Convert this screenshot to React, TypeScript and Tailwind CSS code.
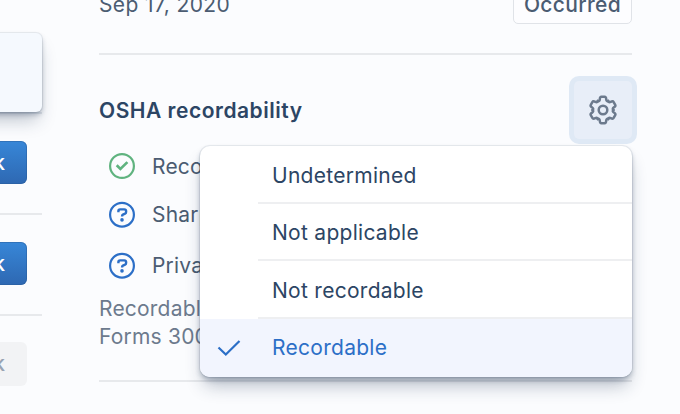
import React from "react";

function ClippedButton({ disabled = false }: { disabled?: boolean }) {
  const look = disabled
    ? "h-[44px] bg-[#f2f3f5] text-[#98a3b3]"
    : "h-[43px] bg-linear-to-b from-[#3787d8] to-[#2e68b2] text-white inset-shadow-[0_0_0_1px_rgba(40,90,150,0.45)]";
  return (
    <div className={`-ml-[20px] flex w-[47px] items-center justify-end rounded-[6px] pr-[22px] text-[21px] font-medium ${look}`}>
      <span>k</span>
    </div>
  );
}

function CheckCircle() {
  return (
    <svg width="28" height="28" viewBox="0 0 28 28" fill="none" stroke="#5fb37f">
      <circle cx="14" cy="14" r="11.9" strokeWidth="2.2" />
      <path d="M8.700 13.300l3.700 3.600 7-6.800" strokeWidth="2.700" />
    </svg>
  );
}

function QuestionCircle() {
  return (
    <svg width="28" height="28" viewBox="0 0 28 28" fill="none" stroke="#2c6fc7">
      <circle cx="14" cy="13.700" r="11.9" strokeWidth="2.2" />
      <path d="M10.400 11.200V9.900q0-1.500 1.700-1.500h4.200q1.800 0 1.800 1.700v.900q0 1.200-1 1.600l-2.200 1q-.8.400-.8 1.300v.700" strokeWidth="2.400" />
      <circle cx="14" cy="18.900" r="1.800" fill="#2c6fc7" stroke="none" />
    </svg>
  );
}

const toothAngles = [0, 60, 120, 180, 240, 300];

function Gear() {
  return (
    <svg width="30" height="30" viewBox="-15 -15 30 30" fill="none" stroke="#6c7a8d" strokeWidth="2.500" strokeLinecap="round" strokeLinejoin="round">
      {toothAngles.map((angle) => (
        <path
          key={angle}
          transform={`rotate(${angle})`}
          d="M-5.250-9.100C-4-8.400-3.300-9.300-3.200-10.700C-3.100-12.600-2.600-13.200-1.600-13.200H1.600C2.600-13.200 3.100-12.600 3.200-10.700C3.300-9.300 4-8.400 5.250-9.100"
        />
      ))}
      <circle r="4.300" />
    </svg>
  );
}

const statuses = [
  { label: "Recordable", done: true, height: "h-[48px]" },
  { label: "Sharps injury", done: false, height: "h-[50px]" },
  { label: "Privacy case", done: false, height: "h-[51px]" },
];

const options = [
  { label: "Undetermined", height: "h-[58px]" },
  { label: "Not applicable", height: "h-[57px]" },
  { label: "Not recordable", height: "h-[58px]" },
  { label: "Recordable", height: "h-[58px]" },
];

function Menu() {
  return (
    <div className="absolute top-[146px] left-[200px] z-10 w-[432px] overflow-hidden rounded-[10px] bg-white text-[21px] tracking-[0.28px] text-[#2c4564] shadow-[0_0_0_1px_rgba(20,40,70,0.07),0_3px_5px_rgba(30,50,80,0.28),0_12px_18px_-4px_rgba(30,50,80,0.32)]">
      {options.map(({ label, height }) => {
        const selected = label === "Recordable";
        return (
          <div key={label} className={`flex ${height} ${selected ? "bg-[#f2f5fe] text-[#2c6fc7]" : ""}`}>
            <div className="flex w-[58px] items-center justify-center">
              {selected && (
                <svg width="24" height="18" viewBox="0 0 24 18" fill="none" stroke="#2c6fc7" strokeWidth="2.2">
                  <path d="M1.500 8.500l7.300 7L22.500 2" />
                </svg>
              )}
            </div>
            <div className={`flex flex-1 items-center pl-[14px] ${selected ? "" : "border-b-2 border-[#eeeff1] pt-[3px]"}`}>{label}</div>
          </div>
        );
      })}
    </div>
  );
}

export default function App() {
  return (
    <div className="relative flex h-[414px] w-[680px] overflow-hidden bg-[#fbfcfe] font-[Inter,sans-serif] whitespace-nowrap text-[#4b5c72]">
      <aside className="flex w-[42px] shrink-0 flex-col pt-[33px]">
        <div className="-ml-[30px] h-[79px] rounded-[6px] bg-[#f5f9fe] shadow-[0_0_0_1px_rgba(20,40,70,0.07),0_3px_5px_rgba(30,50,80,0.26),0_12px_18px_-4px_rgba(30,50,80,0.28)]" />
        <div className="mb-[27px] h-[2px] bg-[#3c506e]/12" />
        <ClippedButton />
        <div className="mt-[29px] mb-[27px] h-[2px] bg-[#e7e9ec]" />
        <ClippedButton />
        <div className="mt-[29px] mb-[26px] h-[2px] bg-[#e7e9ec]" />
        <ClippedButton disabled />
      </aside>
      <main className="ml-[57px] w-[533px] text-[21px] tracking-[0.2px]">
        <div className="flex h-[53px] items-start justify-between">
          <span className="-mt-[11px] leading-[32px] tracking-[0.4px]">Sep 17, 2020</span>
          <span className="-mt-[16px] flex h-[40px] w-[119px] items-center justify-center rounded-[5px] border border-[#e0e3e8] bg-[#fdfdff] pt-[2px] font-medium tracking-[0.35px]">Occurred</span>
        </div>
        <div className="h-[2px] bg-[#e7e9ec]" />
        <div className="flex h-[87px] items-center justify-between pt-[24px]">
          <h2 className="font-semibold tracking-[0.52px] text-[#2c4564]">OSHA recordability</h2>
          <div className="-mt-[1px] flex size-[58px] shrink-0 items-center justify-center rounded-[5px] bg-[#e8eef8] shadow-[0_0_0_5px_#dfe9f5]">
            <Gear />
          </div>
        </div>
        <div>
          {statuses.map((s) => (
            <div key={s.label} className={`flex items-center gap-[16px] pl-[9px] ${s.height}`}>
              {s.done ? <CheckCircle /> : <QuestionCircle />}
              <span className={s.done ? "pt-[2px]" : ""}>{s.label}</span>
            </div>
          ))}
        </div>
        <p className="mt-[4px] mb-[29px] leading-[28px] text-[#6c7a8d]">
          Recordable
          <br />
          Forms 300
        </p>
        <div className="h-[2px] bg-[#e7e9ec]" />
      </main>
      <Menu />
    </div>
  );
}
